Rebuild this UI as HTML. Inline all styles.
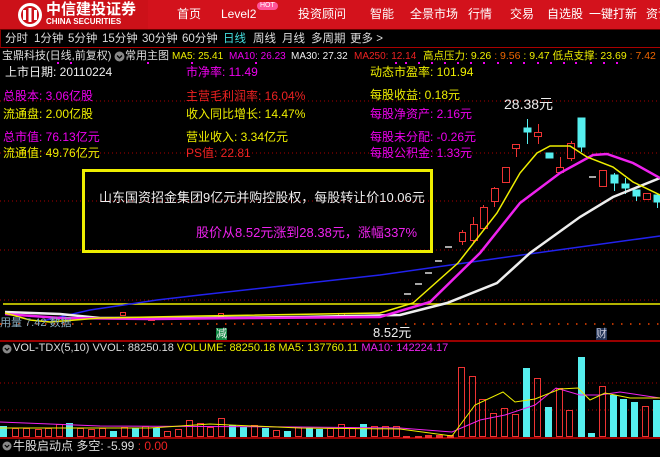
<!DOCTYPE html>
<html><head><meta charset="utf-8"><style>
*{margin:0;padding:0;box-sizing:border-box}
body{width:660px;height:457px;background:#000;overflow:hidden;position:relative;font-family:"Liberation Sans","Noto Sans CJK SC",sans-serif;font-size:11px}
.t{position:absolute;white-space:nowrap;line-height:13px}
#hdr{position:absolute;left:0;top:0;width:660px;height:29px;background:#d3121c;overflow:hidden}
#hdr .lg{position:absolute;left:0;top:0;width:148px;height:29px;background:#cc1119}
.nav{position:absolute;top:7px;color:#fff;font-size:12px;line-height:15px;white-space:nowrap}
#tabs{position:absolute;left:0;top:29px;width:660px;height:19px;border-top:1px solid #600;border-bottom:1px solid #a00;border-left:1px solid #800}
#tabs span{position:absolute;top:2px;color:#ddd;font-size:11.5px;line-height:14px}
</style></head><body>
<div id="hdr"><div class="lg"></div>
<svg style="position:absolute;left:17px;top:2px" width="26" height="26"><circle cx="13" cy="13" r="12" fill="#fff"/><circle cx="13" cy="13" r="9" fill="#cc1119"/><rect x="6" y="8" width="3" height="10" fill="#fff"/><rect x="11.5" y="6" width="3" height="14" fill="#fff"/><rect x="17" y="8" width="3" height="10" fill="#fff"/></svg>
<div class="t" style="left:46px;top:2px;color:#fff;font-size:15px;font-weight:bold;line-height:16px">中信建投证券</div>
<div class="t" style="left:46px;top:17px;color:#fff;font-size:8px;font-weight:bold;line-height:9px">CHINA SECURITIES</div>
<div class="nav" style="left:177px">首页</div>
<div class="nav" style="left:221px">Level2</div>
<div class="t" style="left:257px;top:2px;background:#f59;color:#fff;font-size:7px;line-height:8px;padding:0 3px;border-radius:4px">HOT</div>
<div class="nav" style="left:298px">投资顾问</div>
<div class="nav" style="left:370px">智能</div>
<div class="nav" style="left:410px">全景市场</div>
<div class="nav" style="left:468px">行情</div>
<div class="nav" style="left:510px">交易</div>
<div class="nav" style="left:547px">自选股</div>
<div class="nav" style="left:589px">一键打新</div>
<div class="nav" style="left:646px">资讯</div>
</div>
<div id="tabs">
<span style="left:4px">分时</span><span style="left:33px">1分钟</span><span style="left:67px">5分钟</span><span style="left:101px">15分钟</span><span style="left:141px">30分钟</span><span style="left:181px">60分钟</span><span style="left:222px;color:#4dd">日线</span><span style="left:252px">周线</span><span style="left:281px">月线</span><span style="left:310px">多周期</span><span style="left:349px">更多 &gt;</span>
</div>
<div class="t" style="left:2px;top:50px;color:#ddd;font-size:11px">宝鼎科技(日线,前复权)</div>
<svg style="position:absolute;left:114px;top:51px" width="11" height="11"><circle cx="5.5" cy="5.5" r="5" fill="#888"/><path d="M3 4.5l2.5 2.5 2.5-2.5" stroke="#000" stroke-width="1.3" fill="none"/></svg>
<div class="t" style="left:125px;top:50px;color:#ddd;font-size:11px">常用主图</div>
<div class="t" style="left:172px;top:50px;color:#ee0;font-size:10px">MA5: 25.41</div>
<div class="t" style="left:229px;top:50px;color:#e0e;font-size:10px">MA10: 26.23</div>
<div class="t" style="left:291px;top:50px;color:#eee;font-size:10px">MA30: 27.32</div>
<div class="t" style="left:354px;top:50px;color:#e22;font-size:10px">MA250: 12.14</div>
<div class="t" style="left:423px;top:50px;color:#ee0;font-size:10.5px">高点压力: 9.26 <span style="color:#e60">: 9.56</span> : 9.47 低点支撑: 23.69 <span style="color:#e60">: 7.42</span></div>

<svg style="position:absolute;left:0;top:0" width="660" height="457">
<g stroke="#a00" stroke-dasharray="1 3" stroke-width="1">
<line x1="0" y1="101" x2="660" y2="101"/><line x1="0" y1="153" x2="660" y2="153"/><line x1="0" y1="201" x2="660" y2="201"/><line x1="0" y1="250" x2="660" y2="250"/><line x1="0" y1="300" x2="660" y2="300"/><line x1="0" y1="383" x2="660" y2="383"/><line x1="0" y1="410" x2="660" y2="410"/></g>
<line x1="0" y1="324" x2="660" y2="324" stroke="#e40" stroke-dasharray="1.5 7.5" stroke-width="1.5"/>
<line x1="3" y1="304" x2="660" y2="304" stroke="#ee0" stroke-width="1.5"/>
<g fill="#e0e"><rect x="57" y="62" width="2" height="2"/><rect x="70" y="62" width="2" height="2"/><rect x="147" y="62" width="2" height="2"/><rect x="191" y="62" width="2" height="2"/><rect x="255" y="62" width="2" height="2"/><rect x="395" y="62" width="2" height="2"/><rect x="405" y="62" width="2" height="2"/><rect x="418" y="62" width="2" height="2"/><rect x="431" y="62" width="2" height="2"/><rect x="444" y="62" width="2" height="2"/><rect x="457" y="62" width="2" height="2"/><rect x="470" y="62" width="2" height="2"/><rect x="483" y="62" width="2" height="2"/><rect x="497" y="62" width="2" height="2"/><rect x="510" y="62" width="2" height="2"/><rect x="523" y="62" width="2" height="2"/><rect x="537" y="62" width="2" height="2"/><rect x="550" y="62" width="2" height="2"/><rect x="563" y="62" width="2" height="2"/><rect x="575" y="62" width="2" height="2"/><rect x="590" y="62" width="2" height="2"/><rect x="603" y="62" width="2" height="2"/><rect x="616" y="62" width="2" height="2"/></g>
<rect x="83.5" y="170.5" width="348" height="81" fill="none" stroke="#ee0" stroke-width="3"/>
<g stroke="#ddd" stroke-width="1.5"><line x1="404" y1="294" x2="411" y2="294"/><line x1="415" y1="284" x2="422" y2="284"/><line x1="425" y1="273" x2="432" y2="273"/><line x1="435" y1="261" x2="442" y2="261"/><line x1="445" y1="247" x2="452" y2="247"/><line x1="589" y1="177" x2="596" y2="177"/></g>
<g stroke="#e33" fill="none" stroke-width="1">
<line x1="462.5" y1="230" x2="462.5" y2="245"/><rect x="459.5" y="232.5" width="6" height="9" fill="#000"/>
<line x1="473.5" y1="217" x2="473.5" y2="243"/><rect x="470.5" y="224.5" width="7" height="16" fill="#000"/>
<line x1="483.5" y1="205" x2="483.5" y2="230"/><rect x="480.5" y="207.5" width="7" height="21" fill="#000"/>
<line x1="494.5" y1="187" x2="494.5" y2="207"/><rect x="491.5" y="188.5" width="7" height="13" fill="#000"/>
<rect x="502.5" y="167.5" width="7" height="15" fill="#000"/>
<line x1="516.5" y1="144" x2="516.5" y2="157"/><rect x="512.5" y="144.5" width="7" height="4" fill="#000"/>
<line x1="538.5" y1="124" x2="538.5" y2="144"/><rect x="534.5" y="132.5" width="7" height="4" fill="#000"/>
<line x1="560.5" y1="157" x2="560.5" y2="174"/><rect x="556.5" y="167.5" width="7" height="5" fill="#000"/>
<line x1="571.5" y1="141" x2="571.5" y2="161"/><rect x="567.5" y="143.5" width="7" height="15" fill="#000"/>
<rect x="599.5" y="170.5" width="7" height="16" fill="#000"/>
<rect x="643.5" y="193.5" width="7" height="6" fill="#000"/>
</g>
<g fill="#5ee" stroke="#5ee">
<line x1="527.5" y1="119" x2="527.5" y2="144"/><rect x="524" y="128" width="7" height="4"/>
<rect x="546" y="153" width="7" height="5"/>
<rect x="578" y="118" width="7" height="29"/><line x1="581.5" y1="145" x2="581.5" y2="152"/>
<line x1="614.5" y1="173" x2="614.5" y2="191"/><rect x="611" y="175" width="7" height="8"/>
<line x1="625.5" y1="178" x2="625.5" y2="194"/><rect x="622" y="184" width="7" height="4"/>
<line x1="636.5" y1="190" x2="636.5" y2="201"/><rect x="633" y="190" width="7" height="6"/>
<line x1="657.5" y1="195" x2="657.5" y2="208"/><rect x="654" y="195" width="7" height="7"/>
</g>
<g fill="none" stroke="#e33"><rect x="120.5" y="312.5" width="5" height="3"/><rect x="218.5" y="313.5" width="5" height="3"/><rect x="338.5" y="313.5" width="6" height="3"/><rect x="148.5" y="318.5" width="6" height="2"/></g>
<polyline fill="none" stroke="#2222ee" stroke-width="1.5" points="38,322 90,310 157,300 200,295 380,275 500,258 660,236"/>
<polyline fill="none" stroke="#eee" stroke-width="2.5" points="5,312 60,314 100,318 200,318 300,317 400,315 447,303 497,283 530,253 580,217 613,197 660,178"/>
<polyline fill="none" stroke="#e2e" stroke-width="2.5" points="5,314 60,318 150,319 250,318 380,317 430,302 480,253 520,203 560,173 593,155 607,154 633,163 660,178"/>
<polyline fill="none" stroke="#ee0" stroke-width="1.5" points="5,313 30,320 50,322 100,318 200,316 380,313 413,303 458,263 497,213 520,173 537,153 550,146 570,146 587,157 613,167 633,182 660,195"/>
<line x1="0" y1="341" x2="660" y2="341" stroke="#c00" stroke-width="1.5"/>
<line x1="0" y1="438" x2="660" y2="438" stroke="#c00" stroke-width="1.5"/>
<g fill="#5ee">
<rect x="0" y="426" width="7" height="11"/><rect x="66" y="423" width="7" height="14"/><rect x="110" y="431" width="7" height="6"/><rect x="132" y="428" width="7" height="9"/><rect x="153" y="428" width="7" height="9"/><rect x="229" y="425" width="7" height="12"/><rect x="240" y="427" width="7" height="10"/><rect x="262" y="428" width="7" height="9"/><rect x="284" y="431" width="7" height="6"/><rect x="306" y="428" width="7" height="9"/><rect x="316" y="429" width="7" height="8"/><rect x="360" y="424" width="7" height="13"/><rect x="523" y="368" width="7" height="69"/><rect x="545" y="407" width="7" height="30"/><rect x="578" y="357" width="7" height="80"/><rect x="588" y="433" width="7" height="4"/><rect x="610" y="395" width="7" height="42"/><rect x="620" y="399" width="7" height="38"/><rect x="631" y="402" width="7" height="35"/><rect x="653" y="400" width="7" height="37"/>
</g>
<g fill="none" stroke="#e33">
<rect x="12.5" y="428.5" width="6" height="8"/><rect x="23.5" y="428.5" width="6" height="8"/><rect x="35.5" y="429.5" width="6" height="7"/><rect x="45.5" y="428.5" width="6" height="8"/><rect x="56.5" y="424.5" width="6" height="12"/><rect x="77.5" y="428.5" width="6" height="8"/><rect x="88.5" y="429.5" width="6" height="7"/><rect x="99.5" y="428.5" width="6" height="8"/><rect x="121.5" y="427.5" width="6" height="9"/><rect x="142.5" y="426.5" width="6" height="10"/><rect x="164.5" y="431.5" width="6" height="5"/><rect x="175.5" y="429.5" width="6" height="7"/><rect x="186.5" y="420.5" width="6" height="16"/><rect x="197.5" y="423.5" width="6" height="13"/><rect x="207.5" y="427.5" width="6" height="9"/><rect x="218.5" y="418.5" width="6" height="18"/><rect x="251.5" y="425.5" width="6" height="11"/><rect x="273.5" y="430.5" width="6" height="6"/><rect x="295.5" y="427.5" width="6" height="9"/><rect x="327.5" y="428.5" width="6" height="8"/><rect x="338.5" y="424.5" width="6" height="12"/><rect x="349.5" y="428.5" width="6" height="8"/><rect x="371.5" y="426.5" width="6" height="10"/><rect x="382.5" y="426.5" width="6" height="10"/><rect x="393.5" y="426.5" width="6" height="10"/>
<rect x="458.5" y="367.5" width="6" height="69"/><rect x="469.5" y="376.5" width="6" height="60"/><rect x="479.5" y="399.5" width="6" height="37"/><rect x="490.5" y="413.5" width="6" height="23"/><rect x="501.5" y="408.5" width="6" height="28"/><rect x="512.5" y="414.5" width="6" height="22"/><rect x="534.5" y="378.5" width="6" height="58"/><rect x="556.5" y="388.5" width="6" height="48"/><rect x="566.5" y="410.5" width="6" height="26"/><rect x="599.5" y="386.5" width="6" height="50"/><rect x="642.5" y="406.5" width="6" height="30"/>
</g>
<g fill="#e33"><rect x="403" y="436" width="7" height="2"/><rect x="415" y="436" width="7" height="2"/><rect x="425" y="435" width="7" height="3"/><rect x="436" y="435" width="7" height="3"/><rect x="447" y="435" width="7" height="3"/></g>
<polyline fill="none" stroke="#e2e" stroke-width="1" points="0,422 100,426 300,427 400,428 452,432 480,420 505,415 535,405 556,388 580,395 600,395 620,392 660,398"/>
<polyline fill="none" stroke="#ee0" stroke-width="1" points="0,428 150,428 210,424 230,425 300,428 400,429 452,436 475,405 503,392 515,402 535,399 560,389 578,388 590,400 605,393 630,398 660,398"/>
</svg>
<div class="t" style="left:5px;top:66px;color:#eee;font-size:12px">上市日期: 20110224</div>
<div class="t" style="left:186px;top:66px;color:#e0e;font-size:12px">市净率: 11.49</div>
<div class="t" style="left:370px;top:66px;color:#ee0;font-size:12px">动态市盈率: 101.94</div>
<div class="t" style="left:3px;top:90px;color:#e0e;font-size:12px">总股本: 3.06亿股</div>
<div class="t" style="left:186px;top:90px;color:#e22;font-size:12px">主营毛利润率: 16.04%</div>
<div class="t" style="left:370px;top:89px;color:#ee0;font-size:12px">每股收益: 0.18元</div>
<div class="t" style="left:3px;top:108px;color:#ee0;font-size:12px">流通盘: 2.00亿股</div>
<div class="t" style="left:186px;top:108px;color:#ee0;font-size:12px">收入同比增长: 14.47%</div>
<div class="t" style="left:370px;top:108px;color:#e0e;font-size:12px">每股净资产: 2.16元</div>
<div class="t" style="left:3px;top:131px;color:#e0e;font-size:12px">总市值: 76.13亿元</div>
<div class="t" style="left:186px;top:131px;color:#ee0;font-size:12px">营业收入: 3.34亿元</div>
<div class="t" style="left:370px;top:131px;color:#e0e;font-size:12px">每股未分配: -0.26元</div>
<div class="t" style="left:3px;top:147px;color:#ee0;font-size:12px">流通值: 49.76亿元</div>
<div class="t" style="left:186px;top:147px;color:#e22;font-size:12px">PS值: 22.81</div>
<div class="t" style="left:370px;top:147px;color:#e0e;font-size:12px">每股公积金: 1.33元</div>
<div class="t" style="left:504px;top:96px;color:#eee;font-size:14px;line-height:16px">28.38元</div>
<div class="t" style="left:99px;top:190px;color:#eee;font-size:13px;line-height:16px">山东国资招金集团9亿元并购控股权，每股转让价10.06元</div>
<div class="t" style="left:196px;top:225px;color:#e2e;font-size:13px;line-height:15px">股价从8.52元涨到28.38元，涨幅337%</div>
<div class="t" style="left:0px;top:318px;color:#8ab;font-size:11px;line-height:11px">用量 7.42 数据</div>
<div class="t" style="left:216px;top:328px;background:#184;color:#eee;font-size:11px;line-height:12px">减</div>
<div class="t" style="left:373px;top:325px;color:#eee;font-size:13px;line-height:15px">8.52元</div>
<div class="t" style="left:596px;top:328px;background:#235;color:#ccd;font-size:11px;line-height:12px">财</div>
<svg style="position:absolute;left:2px;top:344px" width="10" height="10"><circle cx="5" cy="5" r="4.5" fill="#888"/><path d="M2.8 4l2.2 2.2 2.2-2.2" stroke="#000" stroke-width="1.2" fill="none"/></svg>
<div class="t" style="left:13px;top:342px;color:#ddd">VOL-TDX(5,10) VVOL: 88250.18 <span style="color:#ee0">VOLUME: 88250.18 MA5: 137760.11</span> <span style="color:#e2e">MA10: 142224.17</span></div>
<svg style="position:absolute;left:2px;top:441px" width="10" height="10"><circle cx="5" cy="5" r="4.5" fill="#888"/><path d="M2.8 4l2.2 2.2 2.2-2.2" stroke="#000" stroke-width="1.2" fill="none"/></svg>
<div class="t" style="left:13px;top:440px;color:#ddd;font-size:12px">牛股启动点 多空: -5.99 <span style="color:#e22">: 0.00</span></div>
</body></html>
